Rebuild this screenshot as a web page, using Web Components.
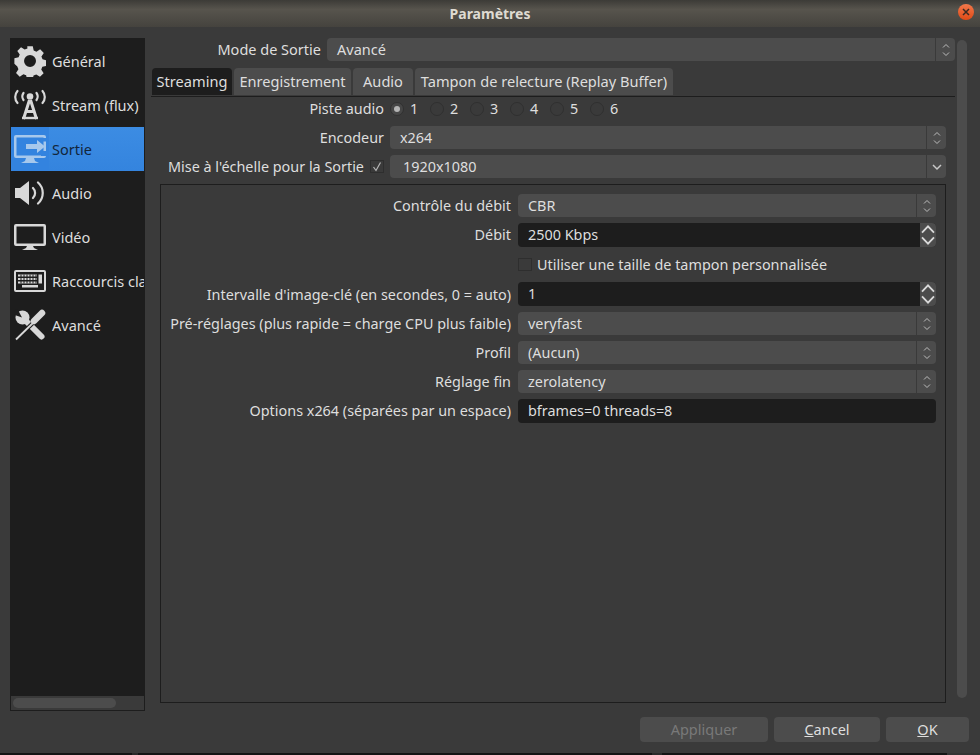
<!DOCTYPE html>
<html lang="fr">
<head>
<meta charset="utf-8">
<title>Paramètres</title>
<style>
html, body { margin: 0; height: 100%; background: #3a3a3a; }
body { font: 14.5px "Noto Sans", sans-serif; color: #dedede; overflow: hidden; }
</style>
</head>
<body>
<settings-window></settings-window>
<script>
const ICONS = {
	gear: `<svg viewBox="0 0 32 32" width="32" height="32"><path fill="#d8d8d8" fill-rule="evenodd" d="M13 0h6l1 4.600 3 1.200 4-2.600 4 4-2.600 4 1.200 3 4.400 1v6l-4.600 1-1.200 3 2.600 4-4 4-4-2.600-3 1.200-1 4.400h-6l-1-4.600-3-1.200-4 2.600-4-4 2.600-4-1.200-3L-1 19v-6l4.600-1 1.200-3-2.600-4 4-4 4 2.600 3-1.200zM16 9.500a6.500 6.500 0 1 0 0 13 6.500 6.500 0 0 0 0-13z" transform="translate(1.300 1.300) scale(.92)"/></svg>`,
	stream: `<svg viewBox="0 0 32 32" width="32" height="32" fill="none" stroke="#d8d8d8"><circle cx="16" cy="7.500" r="3.300" fill="#d8d8d8" stroke="none"/><path stroke-width="2.200" stroke-linecap="round" d="M9.500 4a6 6 0 0 0 0 7M22.500 4a6 6 0 0 1 0 7M3.500 2a9 9 0 0 0 0 12M28.500 2a9 9 0 0 1 0 12"/><path stroke-width="3" d="M15.500 11 9.500 30M16.500 11l6 19M12 22.500h8"/><path stroke-width="2.400" d="M8 29h16"/></svg>`,
	output: `<svg viewBox="0 0 32 28" width="32" height="28"><path fill="#a7c8ec" fill-rule="evenodd" d="M2 0h28a2 2 0 0 1 2 2v19a2 2 0 0 1-2 2H2a2 2 0 0 1-2-2V2a2 2 0 0 1 2-2zm.5 2.500v18h27v-18z"/><path fill="#a7c8ec" d="M12 23h8l1 3 4 2H7l4-2z"/><path fill="#3383df" d="M27 3h6v3.500h-6zM27 16h6v5h-6z"/><path fill="#a7c8ec" d="M12 9h11V5l8 6.500-8 6.500v-4H12z"/></svg>`,
	audio: `<svg viewBox="0 0 32 24" width="32" height="24" fill="none" stroke="#d8d8d8"><path fill="#d8d8d8" stroke="none" d="M1 7h5l9-7v24l-9-7H1z"/><path stroke-width="2.200" d="M19 7a7 7 0 0 1 0 10M24 1.500a14 14 0 0 1 0 21" stroke-linecap="round"/></svg>`,
	video: `<svg viewBox="0 0 32 26" width="32" height="26"><path fill="#d8d8d8" fill-rule="evenodd" d="M2 0h28a2 2 0 0 1 2 2v18a2 2 0 0 1-2 2H2a2 2 0 0 1-2-2V2a2 2 0 0 1 2-2zm.5 2.500v17h27v-17z"/><path fill="#d8d8d8" d="M13 22h6l1 2 4 2H8l4-2z"/></svg>`,
	keyboard: `<svg viewBox="0 0 32 22" width="32" height="22"><rect x="1" y="1" width="30" height="20" rx="1" fill="none" stroke="#d8d8d8" stroke-width="2"/><g fill="#d8d8d8"><path d="M4 4.500h19v2H4zM4 8h19v2H4zM4 11.500h19v2H4zM8 15h16v2.500H8zM24.500 4.500H28v9h-3.500z"/></g><g fill="#1d1d1d"><path d="M6.500 4.500h1v9h-1zM9.500 4.500h1v9h-1zM12.500 4.500h1v9h-1zM15.500 4.500h1v9h-1zM18.500 4.500h1v9h-1zM21.500 4.500h1v9h-1z"/></g></svg>`,
	tools: `<svg viewBox="0 0 32 32" width="32" height="32" fill="none" stroke="#d8d8d8"><circle cx="8.500" cy="8.500" r="7" fill="#d8d8d8" stroke="none"/><path fill="#1d1d1d" stroke="none" d="M8 8.500 3-1-2 5z"/><path stroke-width="6" stroke-linecap="round" d="M11 11l16.500 16.500"/><path stroke-width="4" stroke="#1d1d1d" d="M22 11 3.500 29"/><path stroke-width="1.800" d="M21 12 2 30.500"/><path stroke-width="6.500" stroke-linecap="round" d="M28 4l-8 8"/></svg>`
};

class SettingsWindow extends HTMLElement {
	constructor() {
		super();
		this.root = this.attachShadow({ mode: 'open' });
		this.root.innerHTML = `
			<style>
				:host { display: flex; flex-direction: column; width: 980px; height: 755px; }
				.main { flex: 1; display: flex; padding: 11px 13px 0 10px; gap: 6px; min-height: 0; }
				.right { flex: 1; display: flex; gap: 2px; min-width: 0; }
				.content { flex: 1; min-width: 0; display: flex; flex-direction: column; }
				.mode { display: flex; align-items: center; gap: 6px; height: 23px; --lift: 2px; }
				.mode .lbl { width: 170px; text-align: right; padding-bottom: 2px; }
				.mode x-combo { flex: 1; }
				.scroll { width: 10px; margin-top: 2px; height: 658px; background: #4c4c4c; border-radius: 5px; }
				.panel { border-top: 1px solid #1d1d1d; padding: 0 9px; flex: 1; display: flex; flex-direction: column; }
				.group { margin-top: 6px; height: 519px; border: 1px solid #1d1d1d; padding: 9px 9px 0 0; display: flex; flex-direction: column; gap: 6px; box-sizing: border-box; }
				.footer { display: flex; justify-content: flex-end; gap: 6px; padding: 6px 11px 11px 0; }
				.strip { height: 2px; background: linear-gradient(90deg, #141414 132px, #2a2a2a 132px, #2a2a2a 138px, #141414 138px, #141414 652px, #2a2a2a 652px, #2a2a2a 662px, #141414 662px, #141414 947px, #333 947px); }
				.top { display: flex; flex-direction: column; gap: 6px; }
				.radios { display: flex; align-items: center; height: 23px; }
				.head { --label: 230px; }
				.inner { --label: 357px; --edge: 7px; }
			</style>
			<title-bar>Paramètres</title-bar>
			<div class="main">
				<side-nav>
					<nav-item icon="gear">Général</nav-item>
					<nav-item icon="stream">Stream (flux)</nav-item>
					<nav-item icon="output" selected>Sortie</nav-item>
					<nav-item icon="audio">Audio</nav-item>
					<nav-item icon="video">Vidéo</nav-item>
					<nav-item icon="keyboard">Raccourcis clavier</nav-item>
					<nav-item icon="tools">Avancé</nav-item>
				</side-nav>
				<div class="right">
					<div class="content">
						<div class="mode"><span class="lbl">Mode de Sortie</span><x-combo>Avancé</x-combo></div>
						<tab-bar></tab-bar>
						<div class="panel">
							<div class="top head">
								<form-row label="Piste audio"><div class="radios">
									<x-radio checked>1</x-radio><x-radio>2</x-radio><x-radio>3</x-radio><x-radio>4</x-radio><x-radio>5</x-radio><x-radio>6</x-radio>
								</div></form-row>
								<form-row label="Encodeur"><x-combo>x264</x-combo></form-row>
								<form-row label="Mise à l'échelle pour la Sortie" check><x-combo editable>1920x1080</x-combo></form-row>
							</div>
							<div class="group inner">
								<form-row label="Contrôle du débit"><x-combo>CBR</x-combo></form-row>
								<form-row label="Débit" lift><x-spin>2500 Kbps</x-spin></form-row>
								<form-row label=""><x-check>Utiliser une taille de tampon personnalisée</x-check></form-row>
								<form-row label="Intervalle d'image-clé (en secondes, 0 = auto)"><x-spin>1</x-spin></form-row>
								<form-row label="Pré-réglages (plus rapide = charge CPU plus faible)"><x-combo>veryfast</x-combo></form-row>
								<form-row label="Profil"><x-combo>(Aucun)</x-combo></form-row>
								<form-row label="Réglage fin"><x-combo>zerolatency</x-combo></form-row>
								<form-row label="Options x264 (séparées par un espace)" lift><x-spin plain>bframes=0 threads=8</x-spin></form-row>
							</div>
						</div>
					</div>
					<div class="scroll"></div>
				</div>
			</div>
			<div class="footer">
				<x-button disabled style="width:128px">Appliquer</x-button>
				<x-button style="width:106px"><u>C</u>ancel</x-button>
				<x-button style="width:83px"><u>O</u>K</x-button>
			</div>
			<div class="strip"></div>
		`;
	}
}

class TitleBar extends HTMLElement {
	constructor() {
		super();
		this.attachShadow({ mode: 'open' }).innerHTML = `
			<style>
				:host { display: flex; align-items: center; justify-content: center; position: relative; height: 27px; flex: none; background: linear-gradient(#3c3b37, #57544d 35%, #45433e); font-weight: 700; font-size: 14px; color: #dfdbd2; }
				.close { position: absolute; right: 6px; top: 4px; width: 16px; height: 16px; border-radius: 50%; background: linear-gradient(#f2784b, #df4a16); display: flex; }
			</style>
			<slot></slot>
			<span class="close"><svg viewBox="0 0 16 16" width="16" height="16"><path d="M5 5l6 6M11 5l-6 6" stroke="#3a2a22" stroke-width="1.500"/></svg></span>
		`;
	}
}

class SideNav extends HTMLElement {
	constructor() {
		super();
		this.attachShadow({ mode: 'open' }).innerHTML = `
			<style>
				:host { display: flex; flex-direction: column; width: 135px; height: 673px; flex: none; box-sizing: border-box; background: #1d1d1d; border: 1px solid #1d1d1d; overflow: hidden; }
				.list { flex: 1; min-height: 0; }
				.bar { height: 14px; background: #3a3a3a; padding: 2px; box-sizing: border-box; }
				.thumb { width: 103px; height: 10px; border-radius: 5px; background: #4c4c4c; }
			</style>
			<div class="list"><slot></slot></div>
			<div class="bar"><div class="thumb"></div></div>
		`;
	}
}

class NavItem extends HTMLElement {
	constructor() {
		super();
		this.attachShadow({ mode: 'open' }).innerHTML = `
			<style>
				:host { display: flex; align-items: center; height: 44px; white-space: nowrap; color: #dedede; }
				:host([selected]) { background: linear-gradient(90deg, #3383df 38px, transparent 38px), linear-gradient(#3c8ce3, #3484de); color: #12263c; }
				.icon { width: 32px; height: 32px; margin: 0 6px 0 3px; display: flex; align-items: center; justify-content: center; flex: none; }
				svg { display: block; }
			</style>
			<span class="icon">${ICONS[this.getAttribute('icon')]}</span><slot></slot>
		`;
	}
}

class TabBar extends HTMLElement {
	constructor() {
		super();
		const tabs = [['Streaming', 80, 1], ['Enregistrement', 117], ['Audio', 60], ['Tampon de relecture (Replay Buffer)', 258]];
		this.attachShadow({ mode: 'open' }).innerHTML = `
			<style>
				:host { display: flex; gap: 2px; height: 27px; margin: 7px 0 1px; padding-left: 1px; flex: none; font-size: 14.6px; }
				.tab { display: flex; align-items: center; justify-content: center; padding-bottom: 2px; background: #4c4c4c; border-radius: 4px 4px 0 0; white-space: nowrap; box-sizing: border-box; }
				.on { background: #1d1d1d; }
			</style>
			${tabs.map(t => `<div class="tab ${t[2] ? 'on' : ''}" style="width:${t[1]}px">${t[0]}</div>`).join('')}
		`;
	}
}

class FormRow extends HTMLElement {
	constructor() {
		super();
		const check = this.hasAttribute('check');
		this.attachShadow({ mode: 'open' }).innerHTML = `
			<style>
				:host { display: flex; align-items: center; min-height: 23px; white-space: nowrap; font-size: 14.4px; }
				.label { width: var(--label); flex: none; display: flex; justify-content: flex-end; align-items: center; gap: 6px; box-sizing: border-box; padding-right: var(--edge, 6px); }
				:host([lift]) .label { padding-bottom: 2px; }
				.field { flex: 1; min-width: 0; }
				.box { width: 14px; height: 13px; box-sizing: border-box; background: #3a3a3a; border: 1px solid #2e2e2e; display: flex; align-items: center; justify-content: center; }
			</style>
			<div class="label"><span>${this.getAttribute('label')}</span>${check ? `<span class="box"><svg viewBox="0 0 12 11" width="12" height="11"><path d="M2.500 6l2.500 3.500L9.500 1.500" fill="none" stroke="#b8b8b8" stroke-width="1.200"/></svg></span>` : ''}</div>
			<div class="field"><slot></slot></div>
		`;
	}
}

class XCombo extends HTMLElement {
	constructor() {
		super();
		const arrows = this.hasAttribute('editable')
			? `<path d="M5 8l4 4 4-4" fill="none" stroke="#c8c8c8" stroke-width="1.500"/>`
			: `<path d="M6 7.500l3-3 3 3M6 12.500l3 3 3-3" fill="none" stroke="#bcbcbc" stroke-width="1"/>`;
		this.attachShadow({ mode: 'open' }).innerHTML = `
			<style>
				:host { display: flex; height: 23px; background: #4c4c4c; border-radius: 4px; align-items: center; }
				.text { flex: 1; padding-left: ${this.hasAttribute('editable') ? 13 : 10}px; padding-bottom: var(--lift, 0); white-space: nowrap; }
				.btn { width: 20px; height: 100%; box-sizing: border-box; border-left: 1px solid #3a3a3a; display: flex; align-items: center; justify-content: center; }
			</style>
			<div class="text"><slot></slot></div>
			<div class="btn"><svg viewBox="0 0 18 20" width="18" height="20">${arrows}</svg></div>
		`;
	}
}

class XSpin extends HTMLElement {
	constructor() {
		super();
		const plain = this.hasAttribute('plain');
		this.attachShadow({ mode: 'open' }).innerHTML = `
			<style>
				:host { display: flex; height: 24px; background: #1d1d1d; border-radius: 4px; align-items: center; overflow: hidden; }
				.text { flex: 1; padding: 0 0 2px 10px; white-space: nowrap; }
				.btn { width: 16px; height: 100%; background: #4c4c4c; display: flex; }
			</style>
			<div class="text"><slot></slot></div>
			${plain ? '' : `<div class="btn"><svg viewBox="0 0 16 24" width="16" height="24"><path d="M2 9.700 8 3.300l6 6.400M2 14.300l6 6.400 6-6.400" fill="none" stroke="#d8d8d8" stroke-width="1.800"/></svg></div>`}
		`;
	}
}

class XCheck extends HTMLElement {
	constructor() {
		super();
		this.attachShadow({ mode: 'open' }).innerHTML = `
			<style>
				:host { display: flex; align-items: center; gap: 5px; white-space: nowrap; }
				.box { width: 14px; height: 13px; box-sizing: border-box; background: #3a3a3a; border: 1px solid #2e2e2e; }
			</style>
			<span class="box"></span><slot></slot>
		`;
	}
}

class XRadio extends HTMLElement {
	constructor() {
		super();
		this.attachShadow({ mode: 'open' }).innerHTML = `
			<style>
				:host { display: inline-flex; align-items: center; gap: 6px; width: 40px; flex: none; }
				.dot { width: 14px; height: 14px; box-sizing: border-box; border-radius: 50%; background: #3a3a3a; border: 1px solid #303030; display: flex; align-items: center; justify-content: center; }
				:host([checked]) .dot { background: #464646; }
				:host([checked]) .dot::after { content: ""; width: 6px; height: 6px; border-radius: 50%; background: #b4b4b4; }
			</style>
			<span class="dot"></span><slot></slot>
		`;
	}
}

class XButton extends HTMLElement {
	constructor() {
		super();
		this.attachShadow({ mode: 'open' }).innerHTML = `
			<style>
				:host { display: flex; align-items: center; justify-content: center; height: 25px; padding-bottom: 2px; background: #4c4c4c; border-radius: 4px; box-sizing: border-box; }
				:host([disabled]) { color: #797979; }
			</style>
			<slot></slot>
		`;
	}
}

customElements.define('title-bar', TitleBar);
customElements.define('side-nav', SideNav);
customElements.define('nav-item', NavItem);
customElements.define('tab-bar', TabBar);
customElements.define('form-row', FormRow);
customElements.define('x-combo', XCombo);
customElements.define('x-spin', XSpin);
customElements.define('x-check', XCheck);
customElements.define('x-radio', XRadio);
customElements.define('x-button', XButton);
customElements.define('settings-window', SettingsWindow);
</script>
</body>
</html>
